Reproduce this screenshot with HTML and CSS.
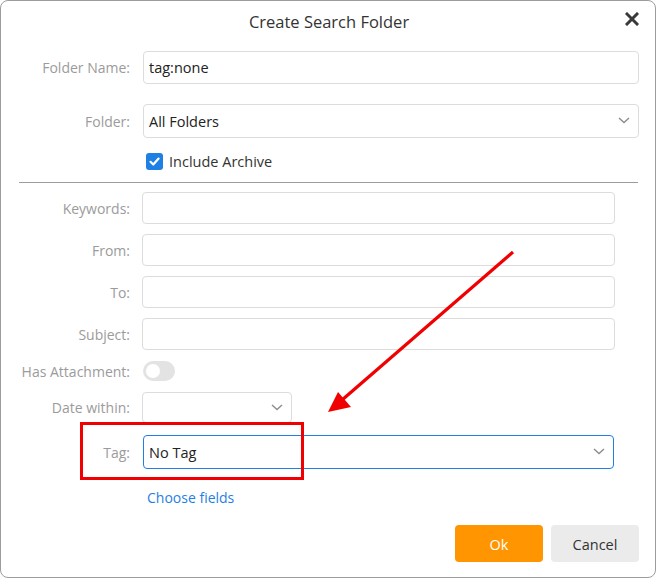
FILE: index.html
```html
<!DOCTYPE html>
<html>
<head>
<meta charset="utf-8">
<link rel="stylesheet" href="styles.css">
</head>
<body>
<div class="dialog">
  <div class="header">
    <div class="title">Create Search Folder</div>
    <svg class="close" width="14" height="14" viewBox="0 0 14 14"><path d="M2 2 L12 12 M12 2 L2 12" stroke="#3a3a3a" stroke-width="3" stroke-linecap="square"/></svg>
  </div>

  <div class="row r-name">
    <div class="label">Folder Name:</div>
    <div class="field wide">tag:none</div>
  </div>
  <div class="row r-folder">
    <div class="label">Folder:</div>
    <div class="field wide select">All Folders<svg class="chev" width="12" height="7" viewBox="0 0 12 7"><path d="M1 1 L6 5.5 L11 1" fill="none" stroke="#8d8d8d" stroke-width="1.4"/></svg></div>
  </div>
  <div class="row r-check">
    <div class="label"></div>
    <div class="check"><span class="box"><svg width="17" height="17" viewBox="0 0 17 17"><path d="M4.5 8.8 L7.3 11.5 L12.6 5.6" fill="none" stroke="#fff" stroke-width="2.2" stroke-linecap="round" stroke-linejoin="round"/></svg></span>Include Archive</div>
  </div>
  <div class="divider"></div>

  <div class="row r-kw">
    <div class="label">Keywords:</div>
    <div class="field narrow"></div>
  </div>
  <div class="row r-std">
    <div class="label">From:</div>
    <div class="field narrow"></div>
  </div>
  <div class="row r-std">
    <div class="label">To:</div>
    <div class="field narrow"></div>
  </div>
  <div class="row r-std">
    <div class="label">Subject:</div>
    <div class="field narrow"></div>
  </div>
  <div class="row r-att">
    <div class="label">Has Attachment:</div>
    <div class="toggle"><span class="knob"></span></div>
  </div>
  <div class="row r-date">
    <div class="label">Date within:</div>
    <div class="field date select"><svg class="chev" width="12" height="7" viewBox="0 0 12 7"><path d="M1 1 L6 5.5 L11 1" fill="none" stroke="#8d8d8d" stroke-width="1.4"/></svg></div>
  </div>
  <div class="row r-tag">
    <div class="label">Tag:</div>
    <div class="field tag select">No Tag<svg class="chev" width="12" height="7" viewBox="0 0 12 7"><path d="M1 1 L6 5.5 L11 1" fill="none" stroke="#8d8d8d" stroke-width="1.4"/></svg></div>
  </div>
  <div class="row r-choose">
    <div class="label"></div>
    <div class="link">Choose fields</div>
  </div>
  <div class="buttons">
    <div class="btn ok">Ok</div>
    <div class="btn cancel">Cancel</div>
  </div>

  <div class="highlight"></div>
  <svg class="arrow" width="658" height="579" viewBox="0 0 658 579">
    <line x1="513" y1="252" x2="342" y2="400" stroke="#f00000" stroke-width="3.2"/>
    <polygon points="328,412 338,392 351,407" fill="#f00000"/>
  </svg>
</div>
</body>
</html>
```

FILE: styles.css
```css
* { box-sizing: border-box; }
html, body { margin: 0; padding: 0; background: #fff; }
body { font-family: "Open Sans", "Noto Sans", sans-serif; color: #222; }

.dialog {
  position: relative;
  width: 656px;
  height: 578px;
  border: 1px solid #9c9c9c;
  border-radius: 8px;
  background: #fff;
  overflow: hidden;
}

.header {
  position: relative;
  height: 50px;
  display: flex;
  justify-content: center;
}
.title {
  margin-top: 9px;
  margin-left: 2px;
  font-size: 16.5px;
  line-height: 24px;
  color: #333;
}
.close { position: absolute; right: 16px; top: 11px; }

.row { display: flex; align-items: center; gap: 12px; }
.label {
  width: 129px;
  flex: none;
  text-align: right;
  font-size: 14px;
  color: #9b9b9b;
}

.field {
  position: relative;
  height: 32px;
  border: 1px solid #dcdcdc;
  border-radius: 4px;
  display: flex;
  align-items: center;
  padding-left: 5px;
  font-size: 14.5px;
  color: #222;
}
.wide { width: 496px; height: 33px; }
.narrow { width: 473px; }
.date { width: 150px; height: 31px; }
.tag { width: 471px; height: 34px; border-color: #1f7fe5; margin-left: 1px; }
.r-name .field { margin-left: 1px; }
.r-folder .field { margin-left: 1px; height: 34px; }

.chev {
  position: absolute;
  right: 8px;
  top: 50%;
  margin-top: -4px;
}

.r-name { margin-top: 0; }
.r-folder { margin-top: 20px; }
.r-check { margin-top: 14px; height: 18px; }
.check {
  display: flex;
  align-items: center;
  gap: 6px;
  font-size: 14.5px;
  color: #333;
  margin-left: 4px;
}
.box {
  width: 17px;
  height: 17px;
  border-radius: 3px;
  background: #1f7fe5;
  display: flex;
}
.divider {
  margin: 12px 17px 0 18px;
  height: 1px;
  background: #9c9c9c;
}
.r-kw { margin-top: 9px; }
.r-std { margin-top: 10px; }
.r-att { margin-top: 11px; height: 20px; }
.toggle {
  width: 32px;
  height: 20px;
  border-radius: 10px;
  background: #e3e3e3;
  position: relative;
  margin-left: 1px;
}
.knob {
  position: absolute;
  left: 3px;
  top: 3px;
  width: 14px;
  height: 14px;
  border-radius: 50%;
  background: #fff;
}
.r-date { margin-top: 11px; }
.r-tag { margin-top: 12px; }
.r-choose { margin-top: 19px; height: 18px; }
.link { color: #1f7fe5; font-size: 14px; margin-left: 5px; }

.buttons {
  display: flex;
  justify-content: flex-end;
  gap: 8px;
  margin-top: 19px;
  padding-right: 16px;
}
.btn {
  height: 37px;
  border-radius: 4px;
  display: flex;
  align-items: center;
  justify-content: center;
  padding-top: 2px;
  font-size: 14.5px;
}
.ok { width: 88px; background: #ff9500; color: #fff; }
.cancel { width: 88px; background: #ebebeb; color: #333; }

.highlight {
  position: absolute;
  left: 79px;
  top: 421px;
  width: 224px;
  height: 58px;
  border: 3px solid #f00000;
}
.arrow { position: absolute; left: -1px; top: -1px; pointer-events: none; }
```
